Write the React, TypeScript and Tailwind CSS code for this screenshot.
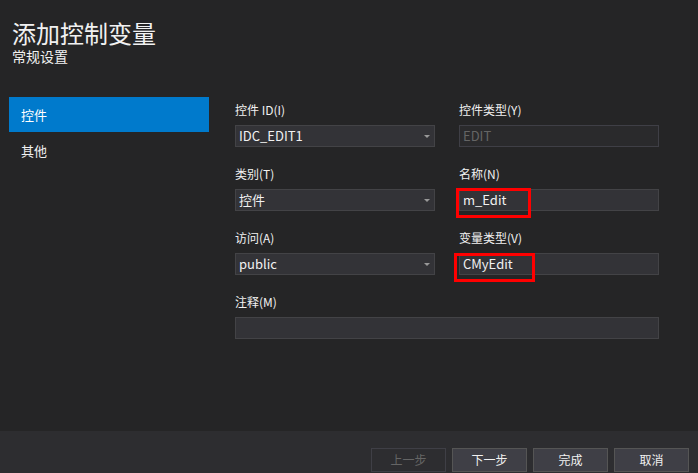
import React from 'react';

const font = { fontFamily: '"Noto Sans CJK SC", "Noto Sans", sans-serif' };

function Label({ children }: { children: React.ReactNode }) {
  return <div className="text-[12px] leading-[16px] text-[#f1f1f1] mb-[7px]">{children}</div>;
}

function Select({ value }: { value: string }) {
  return (
    <div className="relative h-[22px] w-[200px] bg-[#333337] border border-[#434346] flex items-center pl-[3px] text-[13px] text-[#f1f1f1]">
      <span>{value}</span>
      <span className="absolute right-[4px] top-[9px] w-0 h-0 border-l-[3px] border-r-[3px] border-t-[3px] border-l-transparent border-r-transparent border-t-[#999999]" />
    </div>
  );
}

function TextBox({
  value,
  disabled,
  wide,
  mark,
}: {
  value?: string;
  disabled?: boolean;
  wide?: boolean;
  mark?: 'name' | 'type';
}) {
  return (
    <div
      className={`relative h-[22px] ${wide ? 'w-[424px]' : 'w-[200px]'} border flex items-center pl-[3px] text-[13px] ${
        disabled ? 'bg-[#2a2a2c] border-[#3f3f46] text-[#656565]' : 'bg-[#333337] border-[#434346] text-[#f1f1f1]'
      }`}
    >
      <span>{value}</span>
      {mark === 'name' && (
        <div className="absolute left-[-4px] top-[-2px] w-[75px] h-[30px] border-[3px] border-[#ff0000]" />
      )}
      {mark === 'type' && (
        <div className="absolute left-[-6px] top-[-1px] w-[81px] h-[29px] border-[3px] border-[#ff0000]" />
      )}
    </div>
  );
}

function Button({ children, disabled }: { children: React.ReactNode; disabled?: boolean }) {
  return (
    <button
      className={`w-[75px] h-[24px] text-[12px] border ${
        disabled ? 'bg-transparent border-[#3f3f46] text-[#656565]' : 'bg-[#3f3f46] border-[#555555] text-[#f1f1f1]'
      }`}
    >
      {children}
    </button>
  );
}

export default function App() {
  return (
    <div className="w-[698px] h-[473px] bg-[#252526] flex flex-col overflow-hidden" style={font}>
      <div className="flex-1 flex flex-col">
        {/* Header */}
        <div className="pl-[12px] pt-[18px]">
          <div className="text-[24px] leading-[30px] text-[#f1f1f1]">添加控制变量</div>
          <div className="text-[14px] leading-[16px] text-[#f1f1f1]">常规设置</div>
        </div>

        <div className="flex mt-[33px]">
          {/* Nav */}
          <div className="ml-[9px] w-[200px] flex flex-col">
            <div className="h-[35px] bg-[#007acc] flex items-center pl-[12px] text-[13px] text-white">控件</div>
            <div className="h-[38px] flex items-center pl-[12px] text-[13px] text-[#f1f1f1]">其他</div>
          </div>

          {/* Form */}
          <div className="ml-[26px] pt-[5px] flex flex-col gap-[19px]">
            <div className="flex gap-[24px]">
              <div>
                <Label>控件 ID(I)</Label>
                <Select value="IDC_EDIT1" />
              </div>
              <div>
                <Label>控件类型(Y)</Label>
                <TextBox value="EDIT" disabled />
              </div>
            </div>
            <div className="flex gap-[24px]">
              <div>
                <Label>类别(T)</Label>
                <Select value="控件" />
              </div>
              <div>
                <Label>名称(N)</Label>
                <TextBox value="m_Edit" mark="name" />
              </div>
            </div>
            <div className="flex gap-[24px]">
              <div>
                <Label>访问(A)</Label>
                <Select value="public" />
              </div>
              <div>
                <Label>变量类型(V)</Label>
                <TextBox value="CMyEdit" mark="type" />
              </div>
            </div>
            <div>
              <Label>注释(M)</Label>
              <TextBox wide />
            </div>
          </div>
        </div>
      </div>

      {/* Footer */}
      <div className="h-[42px] bg-[#2d2d30] flex justify-end items-start pt-[17px] pr-[9px] gap-[6px]">
        <Button disabled>上一步</Button>
        <Button>下一步</Button>
        <Button>完成</Button>
        <Button>取消</Button>
      </div>
    </div>
  );
}
